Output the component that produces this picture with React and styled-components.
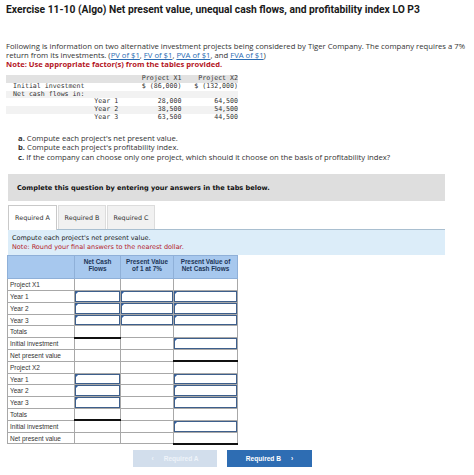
import React from 'react';
import styled, { createGlobalStyle } from 'styled-components';

const GlobalStyle = createGlobalStyle`
  body {
    margin: 0;
    background: #fff;
    font-family: 'Open Sans', 'Liberation Sans', sans-serif;
    color: #222;
  }
`;

const Page = styled.div`
  width: 474px;
  height: 475px;
  overflow: hidden;
  padding: 0 0 0 6px;
  box-sizing: border-box;
`;

const Title = styled.h1`
  margin: 0;
  padding-top: 3px;
  font-family: Roboto, 'Open Sans', sans-serif;
  font-size: 10.3px;
  line-height: 13px;
  font-weight: 700;
  color: #1a1a1a;
  white-space: nowrap;
`;

const Para = styled.p`
  margin: 26px 0 0;
  font-size: 7.7px;
  line-height: 9px;
  color: #333;
  white-space: nowrap;
`;

const Link = styled.a`
  color: #2b6cb3;
  text-decoration: underline;
`;

const Note = styled.div`
  font-size: 7.6px;
  line-height: 9px;
  font-weight: 700;
  color: #b4141e;
`;

const DataTable = styled.table`
  margin-top: 6px;
  border-collapse: collapse;
  width: 232px;
  font-family: 'DejaVu Sans Mono', 'Liberation Mono', monospace;
  font-size: 6.6px;
  color: #333;
  td {
    padding: 0;
    height: 7.8px;
    line-height: 7.8px;
    white-space: pre;
  }
`;

const DataRow = styled.tr`
  background: ${(p) => (p.$head ? '#e2e2e2' : p.$alt ? '#f2f2f2' : '#fff')};
`;

const Num = styled.td`
  text-align: right;
  width: ${(p) => p.$w}px;
`;

const Label = styled.td`
  padding-left: ${(p) => p.$indent || 7}px !important;
  width: ${(p) => p.$w || 0}px;
`;

const Steps = styled.ol`
  list-style: none;
  margin: 12px 0 0;
  padding-left: 12px;
  font-size: 7.7px;
  line-height: 9.5px;
  color: #333;
  b {
    font-weight: 700;
  }
`;

const Banner = styled.div`
  margin: 12px 0 0 2px;
  width: 437px;
  height: 27px;
  background: #dedede;
  display: flex;
  align-items: center;
  padding-left: 9px;
  box-sizing: border-box;
  font-family: 'DejaVu Sans', Verdana, sans-serif;
  font-weight: 700;
  font-size: 6.6px;
  color: #111;
`;

const Tabs = styled.div`
  display: flex;
  margin: 4px 0 0 2px;
  height: 24px;
  gap: 1px;
`;

const Tab = styled.div`
  width: ${(p) => p.$w}px;
  box-sizing: border-box;
  display: flex;
  align-items: center;
  justify-content: center;
  font-family: 'DejaVu Sans', Verdana, sans-serif;
  font-size: 6.4px;
  color: #333;
  background: ${(p) => (p.$active ? '#fff' : '#f1f1f1')};
  border: 1px solid ${(p) => (p.$active ? '#c9c9c9' : '#dcdcdc')};
  border-bottom: none;
  position: relative;
  z-index: ${(p) => (p.$active ? 1 : 0)};
  margin-bottom: ${(p) => (p.$active ? '-1px' : '0')};
`;

const Info = styled.div`
  margin-left: 2px;
  width: 437px;
  height: 26px;
  box-sizing: border-box;
  background: #dcedf9;
  border-top: 1px solid #a9bfd0;
  padding: 4px 0 0 4px;
  font-family: 'DejaVu Sans', Verdana, sans-serif;
  font-size: 6.5px;
  line-height: 8.5px;
  color: #222;
`;

const InfoNote = styled.div`
  color: #b3202a;
`;

const Answer = styled.table`
  margin: 0 0 0 1px;
  border-collapse: collapse;
  table-layout: fixed;
  font-family: 'Liberation Sans', Arial, sans-serif;
  font-size: 6.5px;
  color: #333;
  th,
  td {
    border: 1px solid #a8a8a8;
    padding: 0;
  }
`;

const HeadCell = styled.th`
  width: ${(p) => p.$w}px;
  height: 20px;
  background: #a7c8ee;
  color: #1c3557;
  font-weight: 700;
  font-size: 6.4px;
  line-height: 7px;
  text-align: center;
  vertical-align: top;
  padding-top: 2px !important;
  border-color: #8fb0d8 !important;
`;

const RowLabel = styled.td`
  height: 10.8px;
  padding-left: 2px !important;
  white-space: nowrap;
`;

const Cell = styled.td`
  position: relative;
  border-top: ${(p) => (p.$thickTop ? '2px solid #111 !important' : undefined)};
  border-bottom: ${(p) => (p.$thickBottom ? '2px solid #111 !important' : undefined)};
`;

const InputBox = styled.div`
  position: absolute;
  inset: 0;
  border: 1.5px solid #3e5f8c;
  background: #fff;
  &::before {
    content: '';
    position: absolute;
    left: 0;
    top: 0;
    border-top: 2.5px solid #2d5fa8;
    border-right: 2.5px solid transparent;
  }
`;

const Nav = styled.div`
  display: flex;
  gap: 10px;
  margin: 5px 0 0 127px;
`;

const NavButton = styled.div`
  width: ${(p) => p.$w}px;
  height: 17px;
  display: flex;
  align-items: center;
  justify-content: center;
  gap: 10px;
  font-family: 'Liberation Sans', Arial, sans-serif;
  font-weight: 700;
  font-size: 6.6px;
  color: ${(p) => (p.$disabled ? '#eef3f9' : '#fff')};
  background: ${(p) => (p.$disabled ? '#d2deec' : '#2e6db3')};
`;

const rows = [
  { label: 'Project X1', cells: [{}, {}, {}] },
  { label: 'Year 1', cells: [{ in: 1 }, { in: 1 }, { in: 1 }] },
  { label: 'Year 2', cells: [{ in: 1 }, { in: 1 }, { in: 1 }] },
  { label: 'Year 3', cells: [{ in: 1 }, { in: 1 }, { in: 1 }] },
  { label: 'Totals', cells: [{}, {}, {}] },
  { label: 'Initial investment', cells: [{ top: 1 }, {}, { in: 1 }] },
  { label: 'Net present value', cells: [{}, {}, { bottom: 1 }] },
  { label: 'Project X2', cells: [{}, {}, {}] },
  { label: 'Year 1', cells: [{ in: 1 }, {}, { in: 1 }] },
  { label: 'Year 2', cells: [{ in: 1 }, {}, { in: 1 }] },
  { label: 'Year 3', cells: [{ in: 1 }, {}, { in: 1 }] },
  { label: 'Totals', cells: [{}, {}, {}] },
  { label: 'Initial investment', cells: [{ top: 1 }, {}, { in: 1 }] },
  { label: 'Net present value', cells: [{}, {}, { bottom: 1 }] },
];

export default function App() {
  return (
    <Page>
      <GlobalStyle />
      <Title>Exercise 11-10 (Algo) Net present value, unequal cash flows, and profitability index LO P3</Title>
      <Para>
        Following is information on two alternative investment projects being considered by Tiger Company. The company requires a 7%
        <br />
        return from its investments. (<Link>PV of $1</Link>, <Link>FV of $1</Link>, <Link>PVA of $1</Link>, and{' '}
        <Link>FVA of $1</Link>)
      </Para>
      <Note>Note: Use appropriate factor(s) from the tables provided.</Note>

      <DataTable>
        <tbody>
          <DataRow $head>
            <Label $w={78} />
            <Label $w={45} />
            <Num $w={42}>Project X1</Num>
            <Num $w={58}>Project X2</Num>
            <td />
          </DataRow>
          <DataRow>
            <Label>Initial investment</Label>
            <td />
            <Num>$ (86,000)</Num>
            <Num>$ (132,000)</Num>
            <td />
          </DataRow>
          <DataRow $alt>
            <Label>Net cash flows in:</Label>
            <td />
            <td />
            <td />
            <td />
          </DataRow>
          {[
            ['Year 1', '28,000', '64,500'],
            ['Year 2', '38,500', '54,500'],
            ['Year 3', '63,500', '44,500'],
          ].map(([y, a, b], i) => (
            <DataRow key={y} $alt={i === 1}>
              <td />
              <Label $indent={4}>{y}</Label>
              <Num>{a}</Num>
              <Num>{b}</Num>
              <td />
            </DataRow>
          ))}
        </tbody>
      </DataTable>

      <Steps>
        <li>
          <b>a.</b> Compute each project's net present value.
        </li>
        <li>
          <b>b.</b> Compute each project's profitability index.
        </li>
        <li>
          <b>c.</b> If the company can choose only one project, which should it choose on the basis of profitability index?
        </li>
      </Steps>

      <Banner>Complete this question by entering your answers in the tabs below.</Banner>

      <Tabs>
        <Tab $w={49} $active>
          Required A
        </Tab>
        <Tab $w={48}>Required B</Tab>
        <Tab $w={48}>Required C</Tab>
      </Tabs>
      <Info>
        Compute each project's net present value.
        <InfoNote>Note: Round your final answers to the nearest dollar.</InfoNote>
      </Info>

      <Answer>
        <thead>
          <tr>
            <HeadCell $w={66} />
            <HeadCell $w={45}>
              Net Cash
              <br />
              Flows
            </HeadCell>
            <HeadCell $w={52}>
              Present Value
              <br />
              of 1 at 7%
            </HeadCell>
            <HeadCell $w={63}>
              Present Value of
              <br />
              Net Cash Flows
            </HeadCell>
          </tr>
        </thead>
        <tbody>
          {rows.map((r, i) => (
            <tr key={i}>
              <RowLabel>{r.label}</RowLabel>
              {r.cells.map((c, j) => (
                <Cell key={j} $thickTop={c.top} $thickBottom={c.bottom}>
                  {c.in ? <InputBox /> : null}
                </Cell>
              ))}
            </tr>
          ))}
        </tbody>
      </Answer>

      <Nav>
        <NavButton $w={84} $disabled>
          <span>‹</span>
          <span>Required A</span>
        </NavButton>
        <NavButton $w={85}>
          <span>Required B</span>
          <span>›</span>
        </NavButton>
      </Nav>
    </Page>
  );
}
